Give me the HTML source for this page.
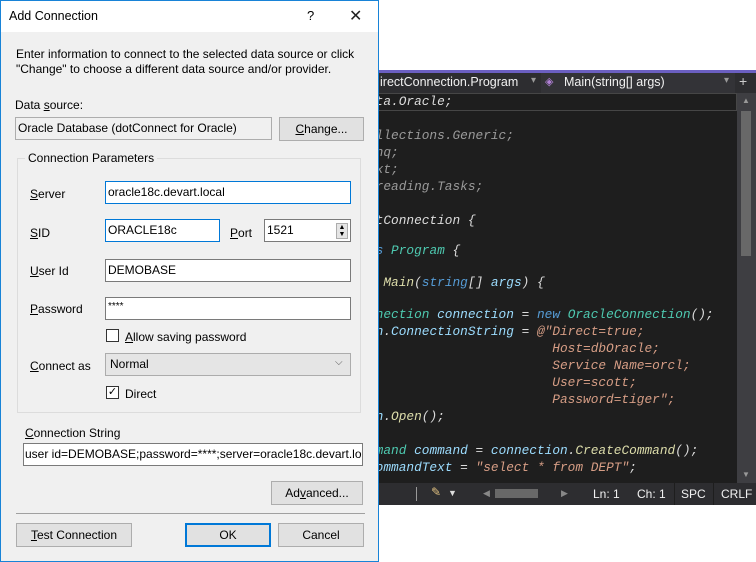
<!DOCTYPE html>
<html><head><meta charset="utf-8"><style>
*{margin:0;padding:0;box-sizing:border-box}
body{width:756px;height:562px;background:#fff;position:relative;overflow:hidden;font-family:"Liberation Sans",sans-serif;font-size:12px;color:#000}
.a{position:absolute;white-space:nowrap}
#ed{position:absolute;left:379px;top:70px;width:377px;height:435px;background:#1e1e1e;overflow:hidden}
.c{position:absolute;font-family:"Liberation Mono",monospace;font-style:italic;font-size:12.8px;white-space:pre;color:#dcdcdc;left:-11px}
.g{color:#9a9a9a}.k{color:#569cd6}.t{color:#4ec9b0}.s{color:#d69d85}.v{color:#9cdcfe}.m{color:#dcdcaa}
#dlg{position:absolute;left:0;top:0;width:379px;height:562px;background:#f0f0f0;border:1px solid #1883d7}
.box{position:absolute;background:#fff;border:1px solid #7a7a7a;height:23px;padding:3px 0 0 2px;font-size:12px;white-space:nowrap;overflow:hidden}
.btn{position:absolute;background:#e1e1e1;border:1px solid #adadad;height:24px;text-align:center;line-height:22px}
.cb{position:absolute;width:13px;height:13px;border:1px solid #333;background:#fff}
u{text-decoration:underline}
</style></head><body>
<div id="ed">
 <div class="a" style="left:0;top:0;width:377px;height:3px;background:#6b5fc1"></div>
 <div class="a" style="left:0;top:3px;width:377px;height:20px;background:#2d2d30"></div>
 <div class="a" style="left:1px;top:5px;color:#f1f1f1;font-size:12.5px">irectConnection.Program</div>
 <div class="a" style="left:152px;top:5px;color:#999;font-size:10px">▾</div>
 <div class="a" style="left:162px;top:3px;width:194px;height:20px;background:#333337"></div>
 <div class="a" style="left:166px;top:5px;color:#b180d7;font-size:11px">◈</div>
 <div class="a" style="left:185px;top:5px;color:#f1f1f1;font-size:12.5px">Main(string[] args)</div>
 <div class="a" style="left:345px;top:5px;color:#999;font-size:10px">▾</div>
 <div class="a" style="left:360px;top:3px;color:#ccc;font-size:14px">+</div>
 <div class="a" style="left:0;top:23px;width:358px;height:18px;border:1px solid #464646;border-left:none"></div>
 <div class="a" style="left:358px;top:23px;width:19px;height:390px;background:#3e3e42"></div>
 <div class="a" style="left:362px;top:41px;width:10px;height:145px;background:#686868"></div>
 <div class="a" style="left:363px;top:26px;color:#999;font-size:8px">▲</div>
 <div class="a" style="left:363px;top:400px;color:#999;font-size:8px">▼</div>
 <div class="c" style="top:24px">ata.Oracle;</div>
 <div class="c g" style="top:58px">ollections.Generic;</div>
 <div class="c g" style="top:75px">inq;</div>
 <div class="c g" style="top:92px">ext;</div>
 <div class="c g" style="top:109px">hreading.Tasks;</div>
 <div class="c" style="top:143px">ctConnection {</div>
 <div class="c" style="top:173px"><span class="k">ss</span> <span class="t">Program</span> {</div>
 <div class="c" style="top:205px"><span class="k">d</span> <span class="m">Main</span>(<span class="k">string</span>[] <span class="v">args</span>) {</div>
 <div class="c" style="top:237px"><span class="t">nnection</span> <span class="v">connection</span> = <span class="k">new</span> <span class="t">OracleConnection</span>();</div>
 <div class="c" style="top:254px"><span class="v">on</span>.<span class="v">ConnectionString</span> = <span class="s">@"Direct=true;</span></div>
 <div class="c s" style="top:271px">                        Host=dbOracle;</div>
 <div class="c s" style="top:288px">                        Service Name=orcl;</div>
 <div class="c s" style="top:305px">                        User=scott;</div>
 <div class="c s" style="top:322px">                        Password=tiger";</div>
 <div class="c" style="top:339px"><span class="v">on</span>.<span class="m">Open</span>();</div>
 <div class="c" style="top:373px"><span class="t">mmand</span> <span class="v">command</span> = <span class="v">connection</span>.<span class="m">CreateCommand</span>();</div>
 <div class="c" style="top:390px"><span class="v">CommandText</span> = <span class="s">"select * from DEPT"</span>;</div>
 <div class="a" style="left:0;top:413px;width:377px;height:22px;background:#2d2d30"></div>
 <div class="a" style="left:37px;top:417px;width:1px;height:14px;background:#999"></div>
 <div class="a" style="left:52px;top:415px;color:#e0c080;font-size:12px">✎</div>
 <div class="a" style="left:69px;top:418px;color:#ddd;font-size:9px">▼</div>
 <div class="a" style="left:104px;top:418px;color:#888;font-size:9px">◀</div>
 <div class="a" style="left:116px;top:419px;width:43px;height:9px;background:#686868"></div>
 <div class="a" style="left:182px;top:418px;color:#888;font-size:9px">▶</div>
 <div class="a" style="left:214px;top:417px;color:#f1f1f1">Ln: 1</div>
 <div class="a" style="left:258px;top:417px;color:#f1f1f1">Ch: 1</div>
 <div class="a" style="left:295px;top:413px;width:1px;height:22px;background:#1e1e1e"></div>
 <div class="a" style="left:302px;top:417px;color:#f1f1f1">SPC</div>
 <div class="a" style="left:334px;top:413px;width:1px;height:22px;background:#1e1e1e"></div>
 <div class="a" style="left:342px;top:417px;color:#f1f1f1">CRLF</div>
</div>
<div id="dlg">
 <div class="a" style="left:0;top:0;width:377px;height:31px;background:#fff"></div>
 <div class="a" style="left:8px;top:8px;font-size:12.5px">Add Connection</div>
 <div class="a" style="left:306px;top:7px;font-size:13px">?</div>
 <div class="a" style="left:348px;top:5px;font-size:16px;color:#222">✕</div>
 <div class="a" style="left:15px;top:46px;line-height:15px">Enter information to connect to the selected data source or click<br>"Change" to choose a different data source and/or provider.</div>
 <div class="a" style="left:14px;top:97px">Data <u>s</u>ource:</div>
 <div class="box" style="left:14px;top:116px;width:257px;background:#f0f0f0;border-color:#adadad">Oracle Database (dotConnect for Oracle)</div>
 <div class="btn" style="left:278px;top:116px;width:85px"><u>C</u>hange...</div>
 <div class="a" style="left:16px;top:157px;width:344px;height:255px;border:1px solid #dcdcdc"></div>
 <div class="a" style="left:24px;top:150px;background:#f0f0f0;padding:0 3px">Connection Parameters</div>
 <div class="a" style="left:29px;top:186px"><u>S</u>erver</div>
 <div class="box" style="left:104px;top:180px;width:246px;border-color:#0078d7">oracle18c.devart.local</div>
 <div class="a" style="left:29px;top:225px"><u>S</u>ID</div>
 <div class="box" style="left:104px;top:218px;width:115px;border-color:#0078d7">ORACLE18c</div>
 <div class="a" style="left:229px;top:225px"><u>P</u>ort</div>
 <div class="box" style="left:263px;top:218px;width:87px">1521</div>
 <div class="a" style="left:335px;top:222px;width:12px;height:16px;background:#e5e5e5;border:1px solid #adadad;font-size:7px;line-height:7px;text-align:center">▲<br>▼</div>
 <div class="a" style="left:29px;top:263px"><u>U</u>ser Id</div>
 <div class="box" style="left:104px;top:258px;width:246px">DEMOBASE</div>
 <div class="a" style="left:29px;top:301px"><u>P</u>assword</div>
 <div class="box" style="left:104px;top:296px;width:246px;font-size:10px">****</div>
 <div class="cb" style="left:105px;top:328px"></div>
 <div class="a" style="left:124px;top:329px"><u>A</u>llow saving password</div>
 <div class="a" style="left:29px;top:358px"><u>C</u>onnect as</div>
 <div class="box" style="left:104px;top:352px;width:246px;background:#e5e5e5;border-color:#acacac;padding-left:4px">Normal</div>
 <div class="a" style="left:334px;top:356px;font-size:10px;color:#555">⌵</div>
 <div class="cb" style="left:105px;top:385px;font-size:11px;line-height:11px;text-align:center">✓</div>
 <div class="a" style="left:124px;top:386px">Direct</div>
 <div class="a" style="left:24px;top:425px"><u>C</u>onnection String</div>
 <div class="box" style="left:22px;top:442px;width:340px;padding-left:1px">user id=DEMOBASE;password=****;server=oracle18c.devart.loc</div>
 <div class="btn" style="left:270px;top:480px;width:92px">Ad<u>v</u>anced...</div>
 <div class="a" style="left:15px;top:512px;width:349px;height:1px;background:#a0a0a0"></div>
 <div class="btn" style="left:15px;top:522px;width:116px"><u>T</u>est Connection</div>
 <div class="btn" style="left:184px;top:522px;width:86px;border:2px solid #0078d7;line-height:20px">OK</div>
 <div class="btn" style="left:277px;top:522px;width:86px">Cancel</div>
</div>
</body></html>
